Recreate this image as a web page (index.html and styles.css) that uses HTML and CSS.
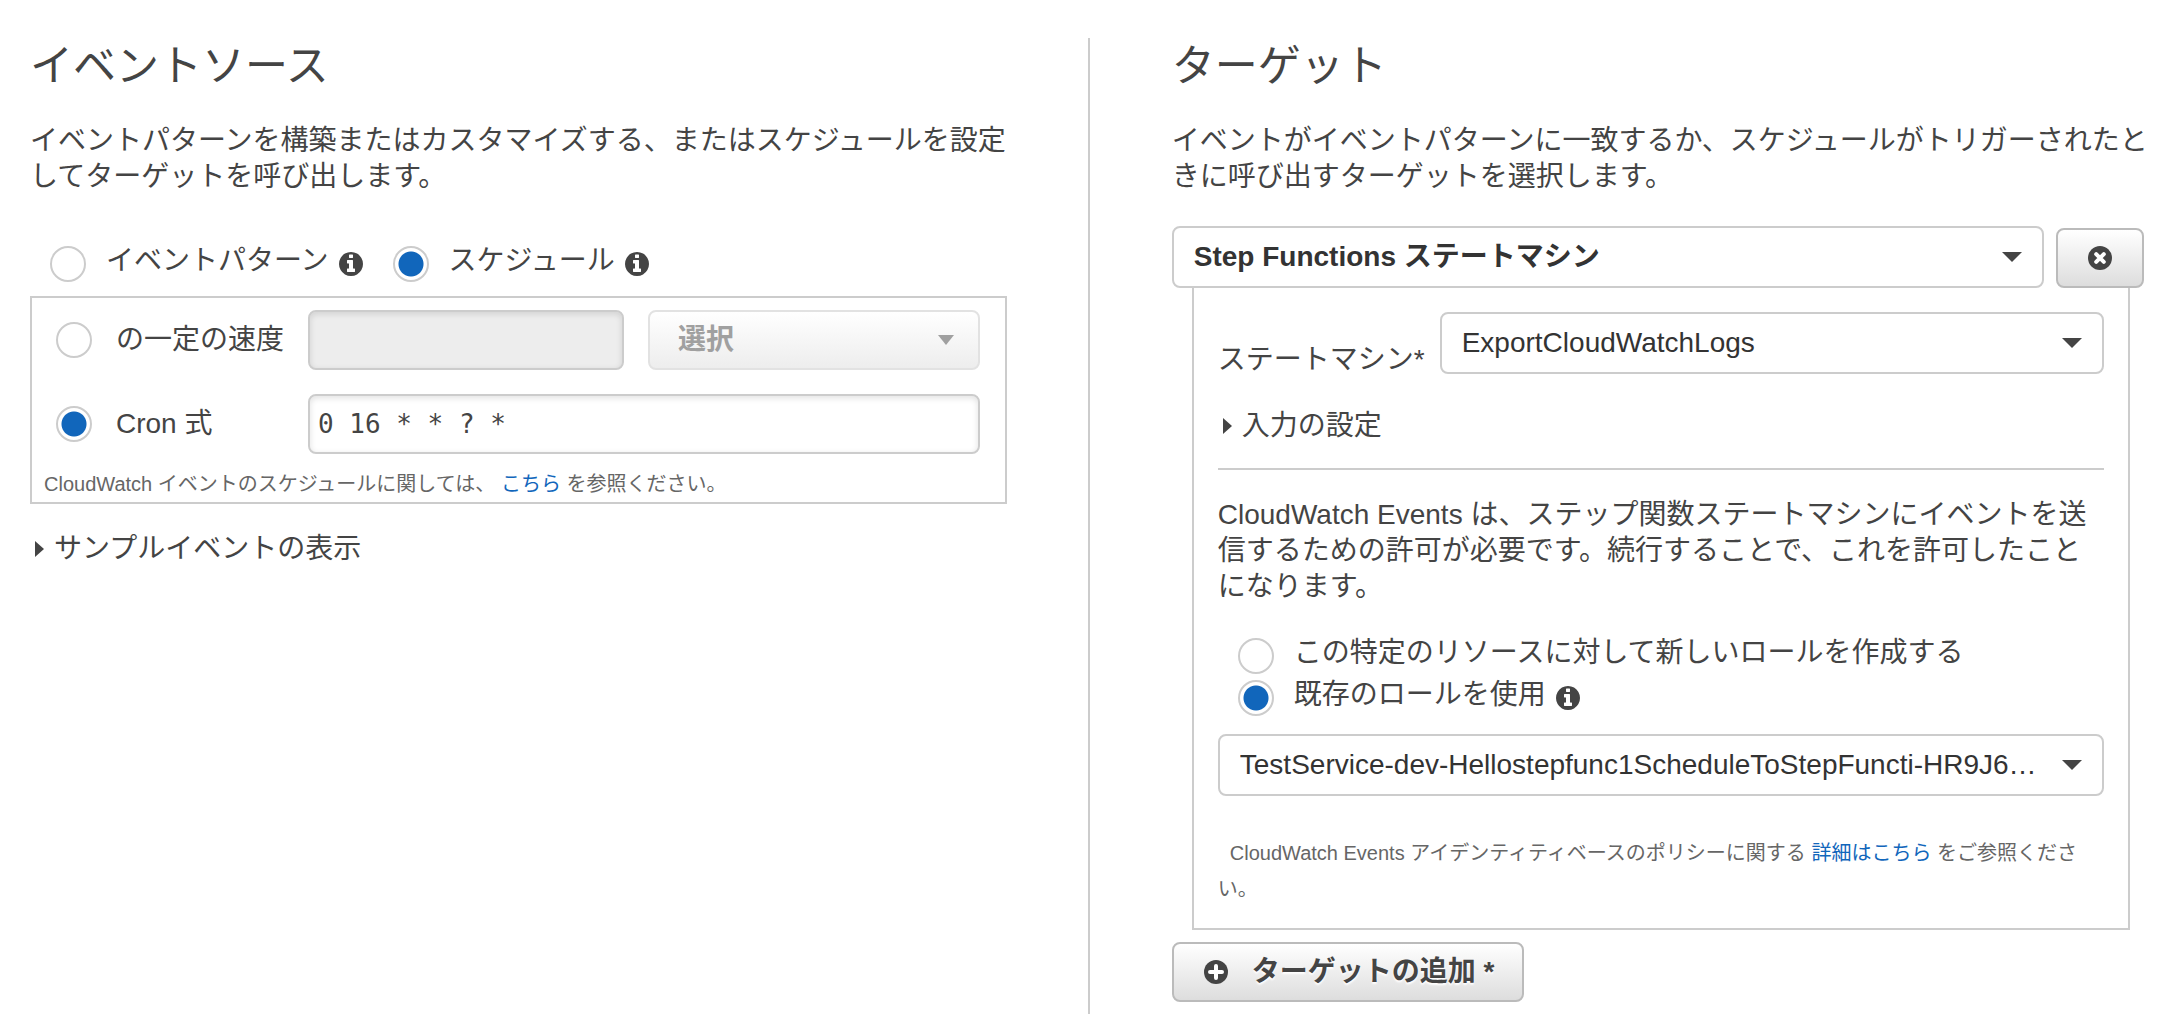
FILE: index.html
```html
<!DOCTYPE html>
<html lang="ja">
<head>
    <meta charset="UTF-8">
    <meta name="viewport" content="width=device-width, initial-scale=1.0">
    <title>イベントソースとターゲット</title>
    <link rel="stylesheet" href="styles.css">
</head>
<body>
    <!-- Shared icon shapes -->
    <svg class="icon-defs" aria-hidden="true">
        <symbol id="icon-info" viewBox="128 128 1536 1536">
            <path d="M1152 1376v-160q0-14-9-23t-23-9h-96v-512q0-14-9-23t-23-9h-320q-14 0-23 9t-9 23v160q0 14 9 23t23 9h96v320h-96q-14 0-23 9t-9 23v160q0 14 9 23t23 9h448q14 0 23-9t9-23zm-128-896v-160q0-14-9-23t-23-9h-192q-14 0-23 9t-9 23v160q0 14 9 23t23 9h192q14 0 23-9t9-23zm640 416q0 209-103 385.5t-279.5 279.5-385.5 103-385.5-103-279.5-279.5-103-385.5 103-385.5 279.5-279.5 385.5-103 385.5 103 279.5 279.5 103 385.5z"/>
        </symbol>
    </svg>

    <main class="rule-editor">
        <section class="column source">
            <h1>イベントソース</h1>
            <p class="description">イベントパターンを構築またはカスタマイズする、またはスケジュールを設定してターゲットを呼び出します。</p>

            <div class="source-types">
                <label class="radio-label"><input type="radio" name="source"><span>イベントパターン</span><svg class="icon"><use href="#icon-info"/></svg></label>
                <label class="radio-label"><input type="radio" name="source" checked><span>スケジュール</span><svg class="icon"><use href="#icon-info"/></svg></label>
            </div>

            <div class="schedule-box">
                <div class="schedule-row">
                    <input type="radio" name="schedule" id="rate">
                    <label for="rate">の一定の速度</label>
                    <div class="rate-fields">
                        <input type="text" aria-label="速度の値" disabled>
                        <select aria-label="単位" disabled>
                            <option>選択</option>
                        </select>
                    </div>
                </div>
                <div class="schedule-row">
                    <input type="radio" name="schedule" id="cron" checked>
                    <label for="cron">Cron 式</label>
                    <input type="text" aria-label="Cron 式の値" value="0 16 * * ? *">
                </div>
                <p class="note">CloudWatch イベントのスケジュールに関しては、 <a href="#">こちら</a> を参照ください。</p>
            </div>

            <button type="button" class="disclosure">サンプルイベントの表示</button>
        </section>

        <section class="column target">
            <h1>ターゲット</h1>
            <p class="description">イベントがイベントパターンに一致するか、スケジュールがトリガーされたときに呼び出すターゲットを選択します。</p>

            <div class="target-header">
                <select class="target-type" aria-label="ターゲットタイプ">
                    <option>Step Functions ステートマシン</option>
                </select>
                <button type="button" class="btn btn-remove" aria-label="ターゲットの削除">
                    <svg class="icon" viewBox="0 0 24 24">
                        <circle cx="12" cy="12" r="12"/>
                        <path class="icon-mark" d="M8.2 8.2l7.6 7.6M15.8 8.2l-7.6 7.6"/>
                    </svg>
                </button>
            </div>

            <div class="target-panel">
                <div class="field">
                    <label for="machine">ステートマシン*</label>
                    <select id="machine">
                        <option>ExportCloudWatchLogs</option>
                    </select>
                </div>
                <button type="button" class="disclosure">入力の設定</button>
                <hr>
                <p>CloudWatch Events は、ステップ関数ステートマシンにイベントを送信するための許可が必要です。続行することで、これを許可したことになります。</p>
                <div class="role-options">
                    <label class="radio-label"><input type="radio" name="role"><span>この特定のリソースに対して新しいロールを作成する</span></label>
                    <label class="radio-label"><input type="radio" name="role" checked><span>既存のロールを使用</span><svg class="icon"><use href="#icon-info"/></svg></label>
                </div>
                <select class="role-select" aria-label="ロール">
                    <option>TestService-dev-Hellostepfunc1ScheduleToStepFuncti-HR9J6…</option>
                </select>
                <p class="note">CloudWatch Events アイデンティティベースのポリシーに関する <a href="#">詳細はこちら</a> をご参照ください。</p>
            </div>

            <button type="button" class="btn btn-add">
                <svg class="icon" viewBox="0 0 24 24">
                    <circle cx="12" cy="12" r="12"/>
                    <path class="icon-mark" d="M12 6v12M6 12h12"/>
                </svg>
                <span>ターゲットの追加 *</span>
            </button>
        </section>
    </main>
</body>
</html>
```
FILE: styles.css
```css
* {
    box-sizing: border-box;
}
body {
    margin: 0;
    padding: 38px 0 16px;
    background: #fff;
    color: #444;
    font-family: "Liberation Sans", "Noto Sans CJK JP", sans-serif;
    font-size: 28px;
    line-height: 36px;
}
h1 {
    margin: 0 0 29px;
    font-size: 43px;
    font-weight: normal;
    line-height: 56px;
}
p {
    margin: 0;
}
a {
    color: #1166bb;
    text-decoration: none;
}
button, input, select {
    font: inherit;
    color: inherit;
    margin: 0;
}
.rule-editor {
    display: grid;
    grid-template-columns: 101fr 99fr;
}
.source {
    padding: 0 81px 0 30px;
    border-right: 2px solid #ccc;
}
.target {
    padding: 0 14px 12px 82px;
}
/* lets the intro text run a little past the form below it */
.description {
    margin-right: -12px;
}

/* icons */
.icon-defs {
    display: none;
}
.icon {
    flex: none;
    width: 24px;
    height: 24px;
    fill: #444;
}
.icon-mark {
    fill: none;
    stroke: #fff;
    stroke-width: 4;
    stroke-linecap: round;
}

/* radios */
input[type="radio"] {
    appearance: none;
    flex: none;
    width: 36px;
    height: 36px;
    border: 2px solid #ccc;
    border-radius: 50%;
    background: #fff;
}
input[type="radio"]:checked {
    background: radial-gradient(circle, #1166bb 12px, #fff 13px);
}
.radio-label {
    display: flex;
    align-items: center;
}
.radio-label span {
    padding: 0 10px 6px 20px;
    line-height: 30px;
}
.source-types {
    display: flex;
    gap: 30px;
    margin-top: 51px;
    padding-left: 20px;
}

/* text boxes and drop-downs */
input[type="text"] {
    width: 100%;
    min-width: 0;
    height: 60px;
    padding: 0 8px;
    border: 2px solid #ccc;
    border-radius: 8px;
    background: #fff;
    box-shadow: inset 0 2px 6px rgba(0, 0, 0, 0.12);
    font-family: "DejaVu Sans Mono", monospace;
    font-size: 26px;
}
input[type="text"]:disabled {
    background: #ededed;
}
select {
    appearance: none;
    width: 100%;
    min-width: 0;
    height: 62px;
    padding: 0 52px 0 20px;
    border: 2px solid #ccc;
    border-radius: 8px;
    background: #fff url("data:image/svg+xml,%3Csvg xmlns='http://www.w3.org/2000/svg' width='20' height='10'%3E%3Cpath d='M0 0h20L10 10z' fill='%23444'/%3E%3C/svg%3E") no-repeat right 20px center;
    color: #333;
}
select:disabled {
    height: 60px;
    padding-left: 28px;
    border-color: #e2e2e2;
    background: url("data:image/svg+xml,%3Csvg xmlns='http://www.w3.org/2000/svg' width='16' height='10'%3E%3Cpath d='M0 0h16L8 10z' fill='%23a0a0a0'/%3E%3C/svg%3E") no-repeat right 24px center, linear-gradient(#fff, #ededed);
    color: #a0a0a0;
    font-weight: bold;
    opacity: 1;
}

/* schedule */
.schedule-box {
    margin-top: 14px;
    padding: 12px 25px 0 24px;
    border: 2px solid #ccc;
}
.schedule-row {
    display: grid;
    grid-template-columns: 36px 168px 1fr;
    column-gap: 24px;
    align-items: center;
    margin-bottom: 24px;
}
.schedule-row:nth-child(2) {
    margin-bottom: 12px;
}
.schedule-row label {
    white-space: nowrap;
}
.rate-fields {
    display: grid;
    grid-template-columns: 316fr 332fr;
    gap: 24px;
}
.note {
    color: #666;
    font-size: 20px;
}
.schedule-box .note {
    margin-left: -12px;
}

/* buttons */
.disclosure {
    display: flex;
    align-items: center;
    gap: 10px;
    padding: 0 5px;
    border: 0;
    background: none;
}
.disclosure::before {
    content: "";
    border-left: 9px solid #444;
    border-top: 8px solid transparent;
    border-bottom: 8px solid transparent;
}
.source .disclosure {
    margin-top: 27px;
}
.btn {
    display: flex;
    align-items: center;
    height: 60px;
    border: 2px solid #bbb;
    border-radius: 8px;
    background: linear-gradient(#fff, #ddd);
    font-weight: bold;
    text-shadow: 0 2px 2px #fff;
}
.btn-remove {
    flex: none;
    justify-content: center;
    width: 88px;
}
.btn-add {
    gap: 24px;
    margin-top: 12px;
    padding: 0 28px 0 30px;
}

/* target */
.target-header {
    display: flex;
    align-items: flex-end;
    gap: 12px;
    margin-top: 31px;
}
.target-type {
    font-weight: bold;
}
.target-panel {
    margin: 0 14px 0 20px;
    padding: 24px 24px 21px;
    border: 2px solid #ccc;
    border-top: 0;
}
.field {
    display: flex;
    align-items: flex-start;
    gap: 15px;
}
.field label {
    flex: none;
    padding-top: 30px;
}
.target-panel .disclosure {
    margin-top: 30px;
}
hr {
    margin: 24px 0 27px;
    border: 0;
    border-top: 2px solid #ccc;
}
.role-options {
    display: grid;
    gap: 6px;
    margin: 33px 0 18px;
    padding-left: 20px;
}
.target-panel .note {
    margin-top: 39px;
    text-indent: 12px;
}
```
